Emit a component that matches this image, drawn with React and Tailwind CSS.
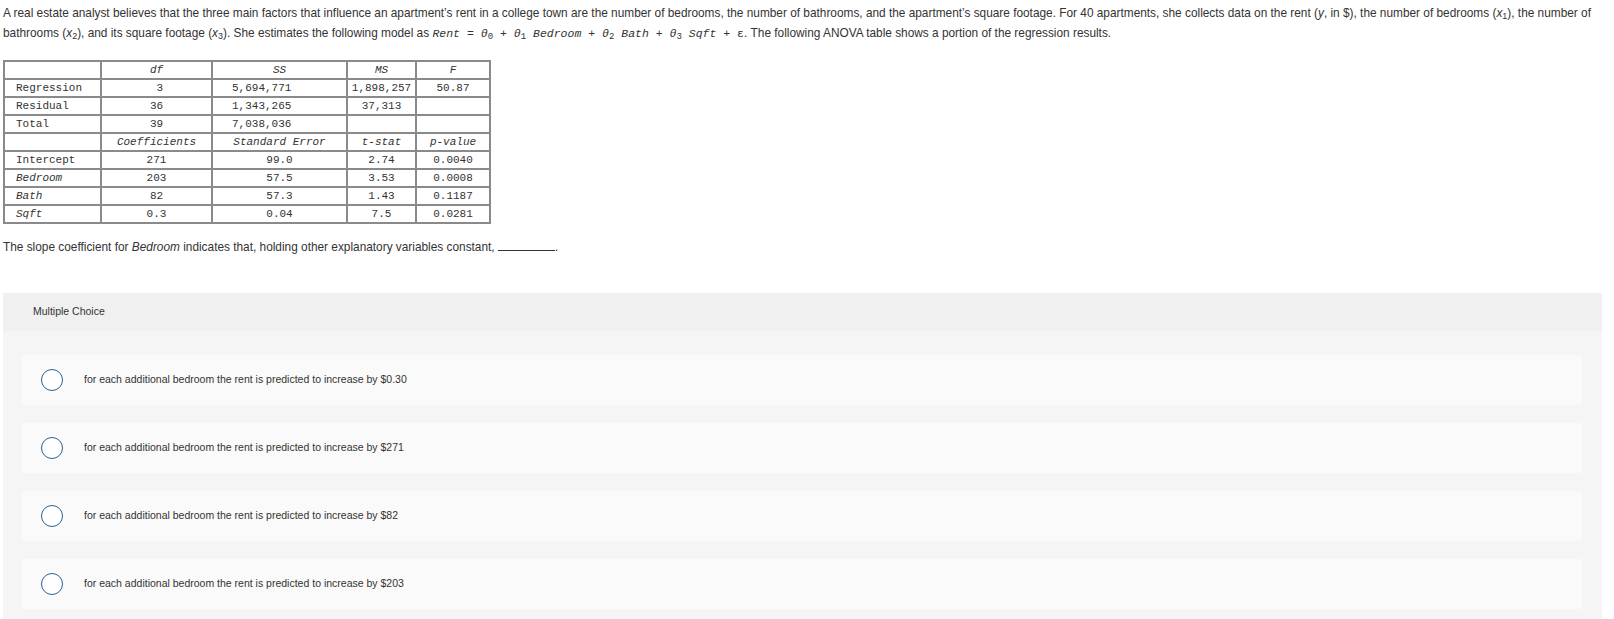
import React from "react";

const mono = { fontFamily: '"Liberation Mono", "DejaVu Sans Mono", monospace' };

function Th({ children, className = "" }) {
  return (
    <td className={`border-2 border-[#8a8a8a] h-[18px] p-0 leading-[14px] text-center italic ${className}`}>{children}</td>
  );
}
function Td({ children, className = "" }) {
  return <td className={`border-2 border-[#8a8a8a] h-[18px] p-0 leading-[14px] ${className}`}>{children}</td>;
}

const options = [
  "for each additional bedroom the rent is predicted to increase by $0.30",
  "for each additional bedroom the rent is predicted to increase by $271",
  "for each additional bedroom the rent is predicted to increase by $82",
  "for each additional bedroom the rent is predicted to increase by $203",
];

function F({ children, i }) {
  return (
    <span className={`text-[11.5px] ${i ? "italic" : ""}`} style={mono}>
      {children}
    </span>
  );
}

export default function App() {
  return (
    <div
      className="bg-white min-h-[619px] w-[1614px] pl-[3px] pt-[3px] text-[#333]"
      style={{ fontFamily: '"Liberation Sans", Arial, sans-serif' }}
    >
      <p className="text-[11.85px] leading-[20px] whitespace-nowrap">
        A real estate analyst believes that the three main factors that influence an apartment’s rent in a college town are the number of bedrooms, the number of bathrooms, and the apartment’s square footage. For 40 apartments, she collects data on the rent (<i>y</i>, in $), the number of bedrooms (<i>x</i><sub className="text-[9px]">1</sub>), the number of
        <br />
        bathrooms (<i>x</i><sub className="text-[9px]">2</sub>), and its square footage (<i>x</i><sub className="text-[9px]">3</sub>). She estimates the following model as{" "}
        <F i>Rent</F>
        <F> = </F>
        <F i>θ</F>
        <sub className="text-[9px]" style={mono}>0</sub>
        <F> + </F>
        <F i>θ</F>
        <sub className="text-[9px]" style={mono}>1</sub>
        <F i> Bedroom</F>
        <F> + </F>
        <F i>θ</F>
        <sub className="text-[9px]" style={mono}>2</sub>
        <F i> Bath</F>
        <F> + </F>
        <F i>θ</F>
        <sub className="text-[9px]" style={mono}>3</sub>
        <F i> Sqft</F>
        <F> + ε</F>. The following ANOVA table shows a portion of the regression results.
      </p>

      <table
        className="mt-[16px] border-collapse border-2 border-[#555] text-[11px] text-[#333]"
        style={mono}
      >
        <colgroup>
          <col className="w-[97px]" />
          <col className="w-[111px]" />
          <col className="w-[135px]" />
          <col className="w-[69px]" />
          <col className="w-[74px]" />
        </colgroup>
        <tbody>
          <tr>
            <Td></Td>
            <Th>df</Th>
            <Th>SS</Th>
            <Th>MS</Th>
            <Th>F</Th>
          </tr>
          <tr>
            <Td className="pl-[11px]">Regression</Td>
            <Td className="text-center whitespace-pre">{" 3"}</Td>
            <Td className="pl-[19px]">5,694,771</Td>
            <Td className="text-center">1,898,257</Td>
            <Td className="text-center">50.87</Td>
          </tr>
          <tr>
            <Td className="pl-[11px]">Residual</Td>
            <Td className="text-center">36</Td>
            <Td className="pl-[19px]">1,343,265</Td>
            <Td className="text-center">37,313</Td>
            <Td></Td>
          </tr>
          <tr>
            <Td className="pl-[11px]">Total</Td>
            <Td className="text-center">39</Td>
            <Td className="pl-[19px]">7,038,036</Td>
            <Td></Td>
            <Td></Td>
          </tr>
          <tr>
            <Td></Td>
            <Th>Coefficients</Th>
            <Th>Standard Error</Th>
            <Th>t-stat</Th>
            <Th>p-value</Th>
          </tr>
          <tr>
            <Td className="pl-[11px]">Intercept</Td>
            <Td className="text-center">271</Td>
            <Td className="text-center">99.0</Td>
            <Td className="text-center">2.74</Td>
            <Td className="text-center">0.0040</Td>
          </tr>
          <tr>
            <Td className="pl-[11px] italic">Bedroom</Td>
            <Td className="text-center">203</Td>
            <Td className="text-center">57.5</Td>
            <Td className="text-center">3.53</Td>
            <Td className="text-center">0.0008</Td>
          </tr>
          <tr>
            <Td className="pl-[11px] italic">Bath</Td>
            <Td className="text-center">82</Td>
            <Td className="text-center">57.3</Td>
            <Td className="text-center">1.43</Td>
            <Td className="text-center">0.1187</Td>
          </tr>
          <tr>
            <Td className="pl-[11px] italic">Sqft</Td>
            <Td className="text-center">0.3</Td>
            <Td className="text-center">0.04</Td>
            <Td className="text-center">7.5</Td>
            <Td className="text-center">0.0281</Td>
          </tr>
        </tbody>
      </table>

      <p className="mt-[13px] text-[11.85px] leading-[20px]">
        The slope coefficient for <i>Bedroom</i> indicates that, holding other explanatory variables constant, <span className="inline-block w-[57px] border-b border-[#333]"></span>.
      </p>

      <div className="mt-[36px] mr-[12px] bg-[#f5f5f5] pb-[10px]">
        <div className="h-[38px] bg-[#f0f0f0] pl-[30px] flex items-center text-[10.5px] text-[#333]">
          Multiple Choice
        </div>
        <div className="flex flex-col gap-[18px] pt-[24px] pl-[19px] pr-[20px]">
          {options.map((o) => (
            <div key={o} className="h-[50px] bg-[#fafafa] rounded-[3px] flex items-center">
              <span className="ml-[19px] w-[22px] h-[22px] rounded-full border-[1.5px] border-[#2f5f93] bg-white shrink-0"></span>
              <span className="ml-[21px] text-[10.5px] text-[#333]">{o}</span>
            </div>
          ))}
        </div>
      </div>
    </div>
  );
}
